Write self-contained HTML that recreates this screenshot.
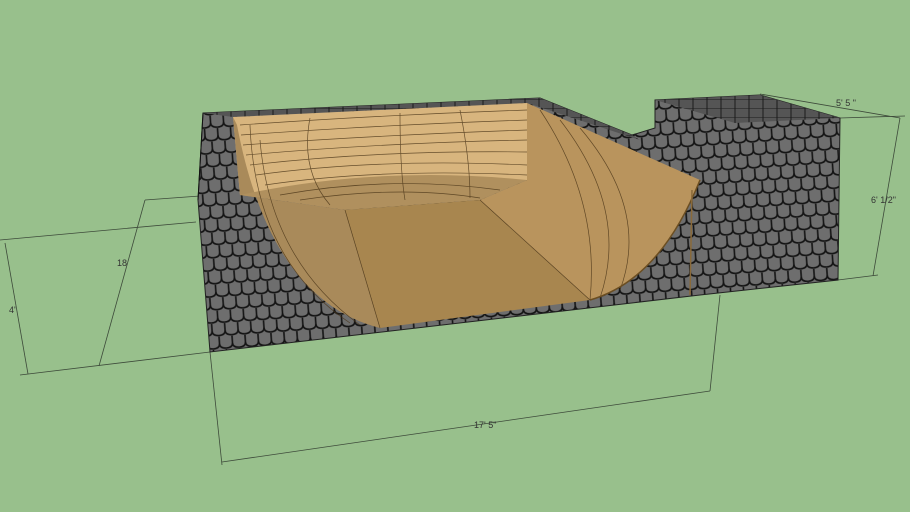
<!DOCTYPE html>
<html><head><style>
html,body{margin:0;padding:0;background:#98c08c;}
svg{display:block}
text{font-family:"Liberation Sans",sans-serif;font-size:9px;fill:#333}
</style></head><body>
<svg width="910" height="512" viewBox="0 0 910 512" xmlns="http://www.w3.org/2000/svg">
<defs>
<pattern id="st" width="26" height="26" patternUnits="userSpaceOnUse" patternTransform="rotate(-4)">
<rect width="26" height="26" fill="#6e6e6e"/>
<path d="M0 13 L0 20 Q0 25 6.5 25 Q13 25 13 20 L13 13 M13 20 Q13 25 19.5 25 Q26 25 26 20 L26 13" stroke="#141414" stroke-width="1.6" fill="none"/>
<path d="M6.5 0 L6.5 7 Q6.5 12 0 12 M6.5 7 Q6.5 12 13 12 Q19.5 12 19.5 7 L19.5 0 M19.5 7 Q19.5 12 26 12" stroke="#141414" stroke-width="1.6" fill="none"/>
</pattern>
<pattern id="st2" width="14" height="9" patternUnits="userSpaceOnUse">
<rect width="14" height="9" fill="#555"/>
<path d="M0 0 L14 0 M7 0 L7 9" stroke="#1a1a1a" stroke-width="1"/>
</pattern>
</defs>
<g stroke="#3d4a3a" stroke-width="0.8" fill="none">
<line x1="0" y1="240" x2="196" y2="222"/>
<line x1="5" y1="243" x2="28" y2="374"/>
<line x1="20" y1="375" x2="210" y2="352"/>
<line x1="145" y1="200" x2="200" y2="196"/>
<line x1="145" y1="200" x2="99" y2="366"/>
<line x1="222" y1="462" x2="710" y2="391"/>
<line x1="222" y1="465" x2="210" y2="352"/>
<line x1="710" y1="391" x2="720" y2="295"/>
<line x1="840" y1="118" x2="905" y2="116"/>
<line x1="900" y1="118" x2="873" y2="276"/>
<line x1="838" y1="280" x2="878" y2="275"/>
<line x1="760" y1="94" x2="900" y2="118"/>
</g>
<polygon points="203,113 540,98 632,135 655,128 655,100 760,95 840,118 838,280 700,295 210,352 198,200" fill="url(#st)" stroke="#222" stroke-width="1"/>
<polygon points="203,113 540,98 632,135 640,140 527,103 233,117" fill="url(#st2)"/>
<polygon points="655,100 760,95 840,118 735,123" fill="url(#st2)"/>
<line x1="198" y1="200" x2="203" y2="113" stroke="#111"/>
<polygon points="233,117 527,103 527,180 240,195" fill="#d8b57e"/>
<path d="M527,103 L700,180 Q660,280 590,300 L480,200 L527,180 Z" fill="#b9945d"/>
<path d="M233,117 L240,195 L345,210 L380,328 Q270,300 237,125 Z" fill="#a98a5a"/>
<path d="M240,195 Q380,165 527,180 L480,200 L345,210 Z" fill="#b0905e"/>
<polygon points="345,210 480,200 590,300 380,328" fill="#a8864f"/>
<g stroke="#4a3518" stroke-width="0.7" fill="none" opacity="0.8">
<path d="M240,125 Q380,115 527,110"/><path d="M241,135 Q380,125 527,120"/><path d="M243,145 Q380,135 527,130"/><path d="M246,155 Q380,143 527,140"/><path d="M250,165 Q380,150 527,152"/><path d="M256,175 Q380,158 527,165"/><path d="M265,185 Q380,168 527,175"/>
<path d="M280,195 Q390,175 500,190"/><path d="M300,200 Q400,185 480,198"/>
<path d="M540,110 Q600,200 590,300"/><path d="M560,120 Q630,210 600,298"/><path d="M580,128 Q650,210 620,290"/>
<path d="M260,140 Q270,260 360,325"/><path d="M250,125 Q255,260 350,323"/>
<path d="M310,118 Q300,170 330,205"/><path d="M400,113 Q400,170 405,200"/><path d="M460,110 Q470,160 470,198"/>
<line x1="345" y1="210" x2="380" y2="328"/><line x1="480" y1="200" x2="590" y2="300"/>
</g>
<path d="M700,180 Q660,280 590,300" stroke="#6b4e22" stroke-width="1.5" fill="none"/>
<line x1="692" y1="190" x2="690" y2="295" stroke="#8a6a3a" stroke-width="1.5"/>
<text x="117" y="266">18</text>
<text x="9" y="313">4'</text>
<text x="474" y="428">17' 5"</text>
<text x="836" y="106">5' 5 "</text>
<text x="871" y="203">6' 1/2"</text>
</svg>
</body></html>
